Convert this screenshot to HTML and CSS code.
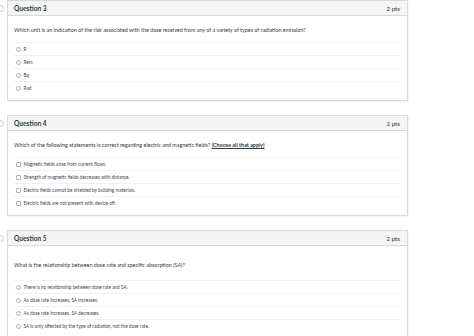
FILE: index.html
```html
<!DOCTYPE html>
<html lang="en">
<head>
    <meta charset="UTF-8">
    <title>Quiz</title>
    <link rel="stylesheet" href="styles.css">
</head>
<body>
    <div class="quiz">
        <div class="question">
            <span class="flag"></span>
            <div class="question-header">
                <h2>Question 3</h2>
                <span class="points">2 pts</span>
            </div>
            <div class="question-body">
                <p class="question-text">Which unit is an indication of the risk associated with the dose received from any of a variety of types of radiation emission?</p>
                <ul class="answers">
                    <li><span class="radio"></span>R</li>
                    <li><span class="radio"></span>Rem</li>
                    <li><span class="radio"></span>Bq</li>
                    <li><span class="radio"></span>Rad</li>
                </ul>
            </div>
        </div>

        <div class="question">
            <span class="flag"></span>
            <div class="question-header">
                <h2>Question 4</h2>
                <span class="points">2 pts</span>
            </div>
            <div class="question-body">
                <p class="question-text">Which of the following statements is correct regarding electric and magnetic fields? <strong>(Choose all that apply)</strong></p>
                <ul class="answers">
                    <li><span class="checkbox"></span>Magnetic fields arise from current flows.</li>
                    <li><span class="checkbox"></span>Strength of magnetic fields decreases with distance.</li>
                    <li><span class="checkbox"></span>Electric fields cannot be shielded by building materials.</li>
                    <li><span class="checkbox"></span>Electric fields are not present with device off.</li>
                </ul>
            </div>
        </div>

        <div class="question">
            <span class="flag"></span>
            <div class="question-header">
                <h2>Question 5</h2>
                <span class="points">2 pts</span>
            </div>
            <div class="question-body spaced">
                <p class="question-text">What is the relationship between dose rate and specific absorption (SA)?</p>
                <ul class="answers">
                    <li><span class="radio"></span>There is no relationship between dose rate and SA.</li>
                    <li><span class="radio"></span>As dose rate increases, SA increases.</li>
                    <li><span class="radio"></span>As dose rate increases, SA decreases.</li>
                    <li><span class="radio"></span>SA is only affected by the type of radiation, not the dose rate.</li>
                </ul>
            </div>
        </div>
    </div>
</body>
</html>
```

FILE: styles.css
```css
* {
    margin: 0;
    padding: 0;
    box-sizing: border-box;
    font-family: 'Lato', 'Liberation Sans', sans-serif;
}

body {
    background: white;
    color: #2d3b45;
    overflow: hidden;
}

.quiz {
    width: 401px;
    margin-left: 7px;
}

.question {
    position: relative;
    border: 1px solid #d6dadc;
    box-shadow: 1px 1px 1px rgba(0, 0, 0, 0.05);
    margin-bottom: 14px;
    background: white;
}

.flag {
    position: absolute;
    left: -11px;
    top: 4px;
    width: 7px;
    height: 7px;
    border: 1px solid #c3c9cd;
    border-radius: 50%;
}

.question-header {
    height: 15px;
    display: flex;
    align-items: center;
    justify-content: space-between;
    padding: 0 7px 0 6px;
    background: #f5f5f5;
    border-bottom: 1px solid #d6dadc;
}

.question-header h2 {
    font-size: 6.6px;
    font-weight: 700;
    color: #2d3b45;
}

.points {
    font-size: 6.2px;
    color: #2d3b45;
}

.question-body {
    padding: 10px 6px 6px;
}

.question-text {
    font-size: 5.4px;
    line-height: 8px;
    margin-bottom: 8px;
}

.question-text strong {
    text-decoration: underline;
}

.spaced {
    padding-top: 15px;
}

.spaced .question-text {
    margin-bottom: 11px;
}

.answers {
    list-style: none;
}

.answers li {
    height: 13px;
    display: flex;
    align-items: center;
    border-top: 1px solid #eef0f1;
    font-size: 4.7px;
    color: #3b4851;
    padding-left: 2px;
}

.radio {
    width: 5px;
    height: 5px;
    border: 0.5px solid #aab3b9;
    border-radius: 50%;
    margin-right: 2.5px;
    flex-shrink: 0;
}

.checkbox {
    width: 5px;
    height: 5px;
    border: 0.5px solid #aab3b9;
    border-radius: 1px;
    margin-right: 2.5px;
    flex-shrink: 0;
}
```
